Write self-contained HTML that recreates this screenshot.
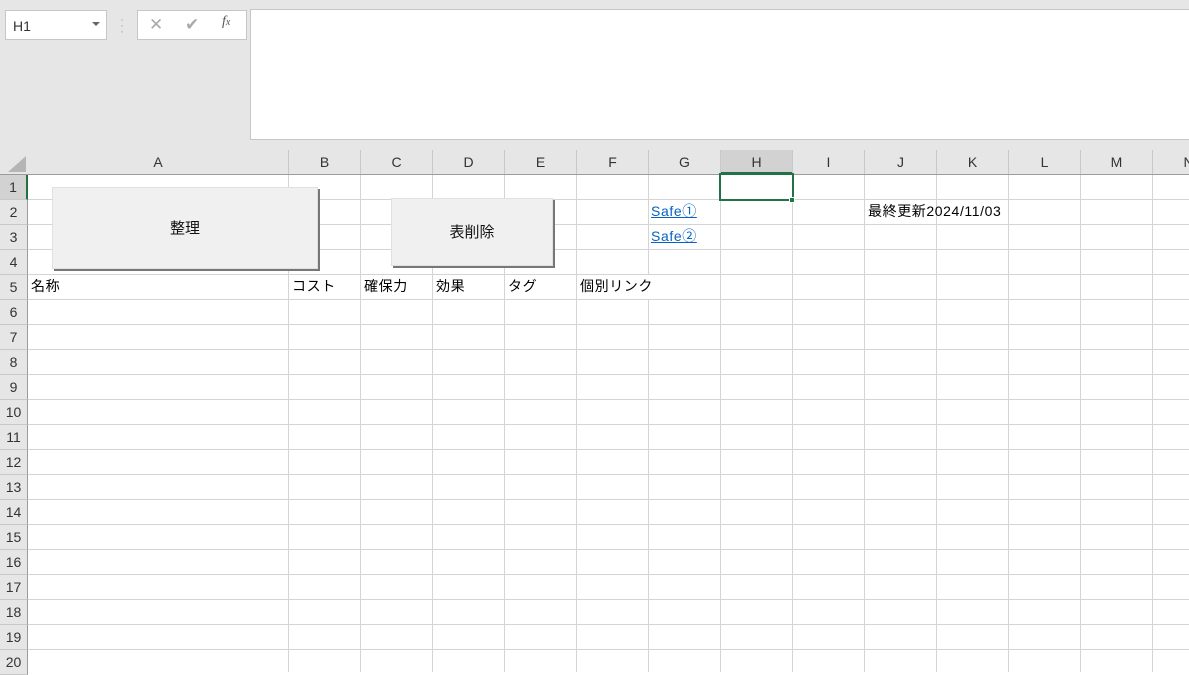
<!DOCTYPE html><html><head><meta charset="utf-8"><style>
*{margin:0;padding:0;box-sizing:border-box}
body{width:1189px;height:672px;overflow:hidden;position:relative;background:#fff;font-family:"Liberation Sans","Noto Sans CJK JP",sans-serif;font-size:14px;color:#000}
.a{position:absolute}
.top{left:0;top:0;width:1189px;height:150px;background:#e6e6e6}
.ch{top:150px;height:25px;background:#e6e6e6;border-bottom:1px solid #9c9c9c;}
.col{top:150px;height:24px;border-right:1px solid #c8c8c8;text-align:center;line-height:24px;font-size:14px;color:#333}
.vl{top:175px;width:1px;height:497px;background:#d4d4d4}
.hl{left:28px;width:1161px;height:1px;background:#d4d4d4}
.rh{left:0;width:28px;height:25px;background:#e6e6e6;border-bottom:1px solid #c8c8c8;border-right:1px solid #9c9c9c;text-align:center;line-height:25px;font-size:14px;color:#333}
.t{font-size:14px;line-height:25px;color:#000;letter-spacing:0.6px;white-space:nowrap}
.btn{background:#f0f0f0;border:1px solid #e0e0e0;box-shadow:2px 2px 0 #777;text-align:center;font-size:15px;color:#111}
</style></head><body>
<div class="a top"></div>
<div class="a" style="left:5px;top:10px;width:102px;height:30px;background:#fff;border:1px solid #c6c6c6;font-size:14px;line-height:30px;padding-left:7px;color:#333">H1</div>
<div class="a" style="left:92px;top:22px;width:0;height:0;border-left:4px solid transparent;border-right:4px solid transparent;border-top:4px solid #666"></div>
<div class="a" style="left:120px;top:16px;color:#aaa;font-size:12px;line-height:6px">·<br>·<br>·</div>
<div class="a" style="left:137px;top:10px;width:110px;height:30px;background:#fff;border:1px solid #c6c6c6"></div>
<div class="a" style="left:149px;top:15px;color:#aaa;font-size:17px">✕</div>
<div class="a" style="left:185px;top:15px;color:#aaa;font-size:17px">✔</div>
<div class="a" style="left:222px;top:14px;color:#555;font-size:14px;font-style:italic;font-family:'Liberation Serif',serif"><i>f</i><span style="font-size:10px">x</span></div>
<div class="a" style="left:250px;top:9px;width:939px;height:131px;background:#fff;border:1px solid #c6c6c6;border-right:none"></div>
<div class="a ch" style="left:0;width:1189px"></div>
<div class="a" style="left:8px;top:156px;width:0;height:0;border-left:18px solid transparent;border-bottom:16px solid #b5b5b5"></div>
<div class="a" style="left:720px;top:150px;width:72px;height:24px;background:#d2d2d2;border-bottom:2px solid #217346"></div>
<div class="a col" style="left:28px;width:261px">A</div>
<div class="a col" style="left:289px;width:72px">B</div>
<div class="a col" style="left:361px;width:72px">C</div>
<div class="a col" style="left:433px;width:72px">D</div>
<div class="a col" style="left:505px;width:72px">E</div>
<div class="a col" style="left:577px;width:72px">F</div>
<div class="a col" style="left:649px;width:72px">G</div>
<div class="a col" style="left:721px;width:72px">H</div>
<div class="a col" style="left:793px;width:72px">I</div>
<div class="a col" style="left:865px;width:72px">J</div>
<div class="a col" style="left:937px;width:72px">K</div>
<div class="a col" style="left:1009px;width:72px">L</div>
<div class="a col" style="left:1081px;width:72px">M</div>
<div class="a col" style="left:1153px;width:72px">N</div>
<div class="a vl" style="left:288px"></div><div class="a vl" style="left:360px"></div><div class="a vl" style="left:432px"></div><div class="a vl" style="left:504px"></div><div class="a vl" style="left:576px"></div><div class="a vl" style="left:648px"></div><div class="a vl" style="left:720px"></div><div class="a vl" style="left:792px"></div><div class="a vl" style="left:864px"></div><div class="a vl" style="left:936px"></div><div class="a vl" style="left:1008px"></div><div class="a vl" style="left:1080px"></div><div class="a vl" style="left:1152px"></div>
<div class="a hl" style="top:199px"></div><div class="a hl" style="top:224px"></div><div class="a hl" style="top:249px"></div><div class="a hl" style="top:274px"></div><div class="a hl" style="top:299px"></div><div class="a hl" style="top:324px"></div><div class="a hl" style="top:349px"></div><div class="a hl" style="top:374px"></div><div class="a hl" style="top:399px"></div><div class="a hl" style="top:424px"></div><div class="a hl" style="top:449px"></div><div class="a hl" style="top:474px"></div><div class="a hl" style="top:499px"></div><div class="a hl" style="top:524px"></div><div class="a hl" style="top:549px"></div><div class="a hl" style="top:574px"></div><div class="a hl" style="top:599px"></div><div class="a hl" style="top:624px"></div><div class="a hl" style="top:649px"></div>
<div class="a rh" style="top:175px;background:#d2d2d2;border-right:2px solid #217346">1</div>
<div class="a rh" style="top:200px">2</div><div class="a rh" style="top:225px">3</div><div class="a rh" style="top:250px">4</div><div class="a rh" style="top:275px">5</div><div class="a rh" style="top:300px">6</div><div class="a rh" style="top:325px">7</div><div class="a rh" style="top:350px">8</div><div class="a rh" style="top:375px">9</div><div class="a rh" style="top:400px">10</div><div class="a rh" style="top:425px">11</div><div class="a rh" style="top:450px">12</div><div class="a rh" style="top:475px">13</div><div class="a rh" style="top:500px">14</div><div class="a rh" style="top:525px">15</div><div class="a rh" style="top:550px">16</div><div class="a rh" style="top:575px">17</div><div class="a rh" style="top:600px">18</div><div class="a rh" style="top:625px">19</div><div class="a rh" style="top:650px">20</div>
<div class="a" style="left:719px;top:173px;width:75px;height:28px;border:2px solid #217346"></div>
<div class="a" style="left:789px;top:197px;width:6px;height:6px;background:#217346;border:1px solid #fff"></div>
<div class="a btn" style="left:52px;top:187px;width:266px;height:82px;line-height:82px">整理</div>
<div class="a btn" style="left:391px;top:198px;width:162px;height:68px;line-height:68px">表削除</div>
<div class="a t" style="left:651px;top:199px;color:#0563c1;text-decoration:underline">Safe①</div>
<div class="a t" style="left:651px;top:224px;color:#0563c1;text-decoration:underline">Safe②</div>
<div class="a t" style="left:868px;top:199px">最終更新2024/11/03</div>
<div class="a t" style="left:31px;top:274px">名称</div>
<div class="a t" style="left:292px;top:274px">コスト</div>
<div class="a t" style="left:364px;top:274px">確保力</div>
<div class="a t" style="left:436px;top:274px">効果</div>
<div class="a t" style="left:508px;top:274px">タグ</div>
<div class="a" style="left:640px;top:275px;width:16px;height:24px;background:#fff"></div>
<div class="a t" style="left:580px;top:274px">個別リンク</div>
</body></html>
